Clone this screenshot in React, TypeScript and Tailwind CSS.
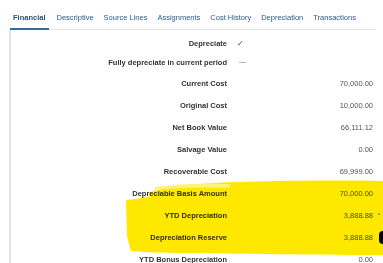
const TABS = [
  "Financial",
  "Descriptive",
  "Source Lines",
  "Assignments",
  "Cost History",
  "Depreciation",
  "Transactions",
];

const ROWS: { label: string; value: string; h: string }[] = [
  { label: "Current Cost", value: "70,000.00", h: "h-[18px]" },
  { label: "Original Cost", value: "10,000.00", h: "h-[22px]" },
  { label: "Net Book Value", value: "66,111.12", h: "h-[22px]" },
  { label: "Salvage Value", value: "0.00", h: "h-[22px]" },
  { label: "Recoverable Cost", value: "69,999.00", h: "h-[22px]" },
  { label: "Depreciable Basis Amount", value: "70,000.00", h: "h-[22px]" },
  { label: "YTD Depreciation", value: "3,888.88", h: "h-[22px]" },
  { label: "Depreciation Reserve", value: "3,888.88", h: "h-[22px]" },
  { label: "YTD Bonus Depreciation", value: "0.00", h: "h-[22px]" },
];

function Marker() {
  return (
    <svg
      className="absolute left-0 top-0 pointer-events-none mix-blend-multiply"
      width="383"
      height="263"
      viewBox="0 0 383 263"
    >
      <path
        d="M150 192 C165 187 190 184 215 183 C260 181 320 180 383 181 L383 255 C330 255 250 254 190 253 C160 253 140 252 131 251 L127 236 L126 200 C135 199 143 198 150 196 Z"
        fill="#ffe800"
      />
      <path d="M155 187 C175 184 200 183 230 184 L230 188 C200 187 175 188 155 190 Z" fill="#fff27a" />
    </svg>
  );
}

export default function App() {
  return (
    <div
      className="relative w-[383px] h-[263px] overflow-hidden bg-white"
      style={{ fontFamily: '"Liberation Sans", Arial, sans-serif' }}
    >
      <div className="pl-[10px] pt-[12px] pr-[8px]">
        <div className="flex border-b border-[#e3e3e3] h-[18px]">
          {TABS.map((t, i) => (
            <div
              key={t}
              className={
                i === 0
                  ? "px-[3px] mr-[5px] text-[7.5px] font-bold text-[#2a4d70] border-b-2 border-[#2d6ca5] -mb-px"
                  : "px-[3px] mr-[4px] text-[7.5px] text-[#2b5a88]"
              }
            >
              {t}
            </div>
          ))}
        </div>
      </div>
      <div className="ml-[9px] border-l-2 border-[#e2e2e2] h-[240px] pt-[4px]">
        <div className="flex items-center h-[19px]">
          <div className="w-[216px] text-right text-[7.5px] font-semibold text-[#333]">Depreciate</div>
          <div className="ml-[10px] text-[8px] text-[#444]">✓</div>
        </div>
        <div className="flex items-center h-[19px]">
          <div className="w-[216px] text-right text-[7.5px] font-semibold text-[#333]">
            Fully depreciate in current period
          </div>
          <div className="ml-[12px] text-[7px] text-[#777]">—</div>
        </div>
        {ROWS.map((r) => (
          <div key={r.label} className={"flex items-end " + r.h}>
            <div className="w-[216px] text-right text-[7.5px] font-semibold text-[#333] leading-[10px] pb-[1px]">
              {r.label}
            </div>
            <div className="w-[146px] text-right text-[7.5px] text-[#555] leading-[10px] pb-[1px]">
              {r.value}
            </div>
          </div>
        ))}
      </div>
      <Marker />
      <div className="absolute left-[379px] top-[231px] w-[8px] h-[13px] rounded-full bg-black" />
      <div className="absolute left-[378px] top-[213px] w-[2px] h-[2px] rounded-full bg-[#888]" />
    </div>
  );
}
